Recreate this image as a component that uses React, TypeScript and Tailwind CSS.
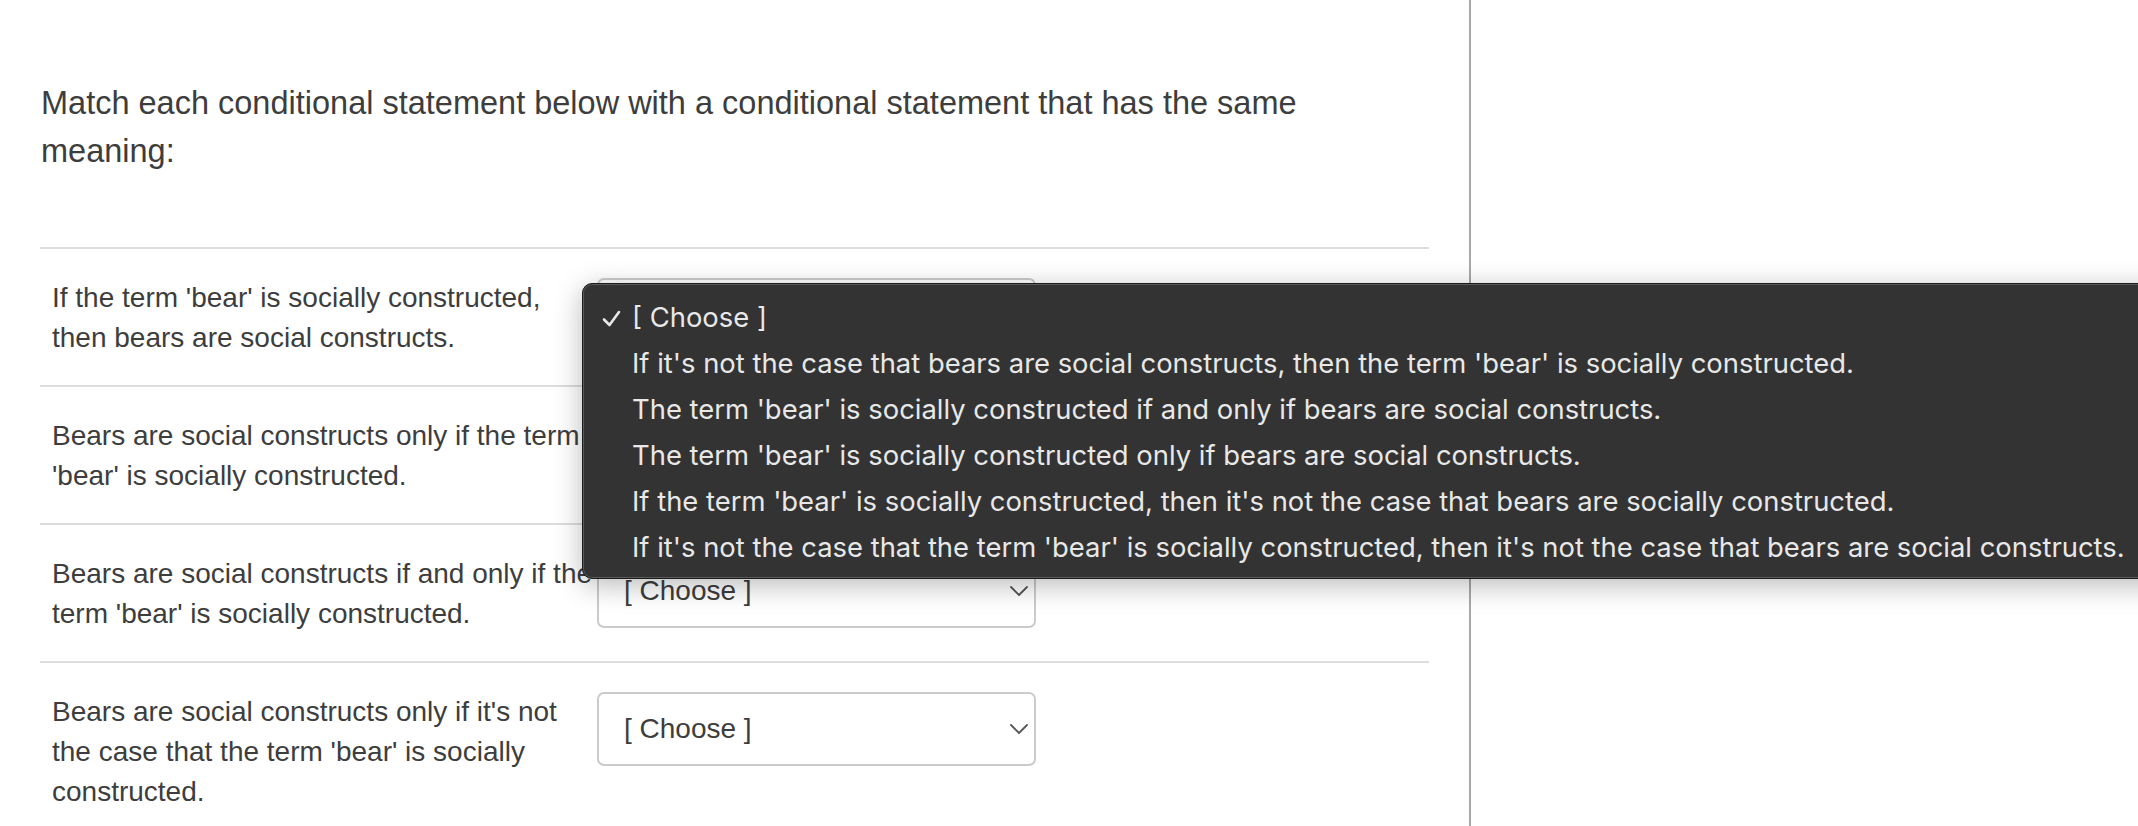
import React from "react"

const rows = [
  "If the term 'bear' is socially constructed, then bears are social constructs.",
  "Bears are social constructs only if the term 'bear' is socially constructed.",
  "Bears are social constructs if and only if the term 'bear' is socially constructed.",
  "Bears are social constructs only if it's not the case that the term 'bear' is socially constructed.",
]

const options = [
  "[ Choose ]",
  "If it's not the case that bears are social constructs, then the term 'bear' is socially constructed.",
  "The term 'bear' is socially constructed if and only if bears are social constructs.",
  "The term 'bear' is socially constructed only if bears are social constructs.",
  "If the term 'bear' is socially constructed, then it's not the case that bears are socially constructed.",
  "If it's not the case that the term 'bear' is socially constructed, then it's not the case that bears are social constructs.",
]

function Chevron() {
  return (
    <svg width="18" height="10" viewBox="0 0 18 10" fill="none">
      <path d="M1 1l8 8 8-8" stroke="#555" strokeWidth="1.8" strokeLinecap="round" strokeLinejoin="round" />
    </svg>
  )
}

function Select() {
  return (
    <div className="flex-none w-[439px] h-[74px] border-2 border-[#cbcbcb] rounded-[7px] bg-white flex items-center justify-between pl-[25px] pr-[6px]">
      <span className="text-[28px] text-[#3d3d3d]">[ Choose ]</span>
      <Chevron />
    </div>
  )
}

export default function App() {
  return (
    <div className="relative w-full h-[826px] overflow-hidden bg-white flex font-['Liberation_Sans',Arial,sans-serif]">
      <div className="flex-none w-[1469px] px-[40px]">
        <p className="pt-[79px] pl-[1px] w-[1330px] text-[32.5px] leading-[48px] text-[#3d3d3d]">
          Match each conditional statement below with a conditional statement that has the same meaning:
        </p>
        <div className="mt-[72px]">
          {rows.map((r, i) => (
            <div key={i} className="flex border-t-2 border-[#dddddd] pl-[12px] pt-[29px] pb-[27px]">
              <div className="flex-none w-[545px] text-[28px] leading-[40px] text-[#3d3d3d]">{r}</div>
              <Select />
            </div>
          ))}
        </div>
      </div>
      <div className="flex-none w-[2px] bg-[#a8a8a8]" />
      <div className="flex-1" />

      {/* open native select menu */}
      <div className="absolute left-[582px] top-[283px] w-[1620px] h-[296px] rounded-[10px] bg-[#333333] border border-[#1b1b1b] shadow-[inset_0_0_0_1px_#5a5a5a,0_6px_28px_rgba(0,0,0,0.28)] pt-[11px] font-['Inter',sans-serif] text-[#e8e8e8]">
        {options.map((o, i) => (
          <div key={i} className="flex items-center h-[46px]">
            <div className="flex-none w-[49px] flex justify-end pr-[11px]">
              {i === 0 && (
                <svg width="19" height="17" viewBox="0 0 19 17" fill="none">
                  <path d="M2 9.5l5.5 5.5L17 2" stroke="#e8e8e8" strokeWidth="2.6" strokeLinecap="round" strokeLinejoin="round" />
                </svg>
              )}
            </div>
            <span className="text-[27.4px] whitespace-nowrap">{o}</span>
          </div>
        ))}
      </div>
    </div>
  )
}
